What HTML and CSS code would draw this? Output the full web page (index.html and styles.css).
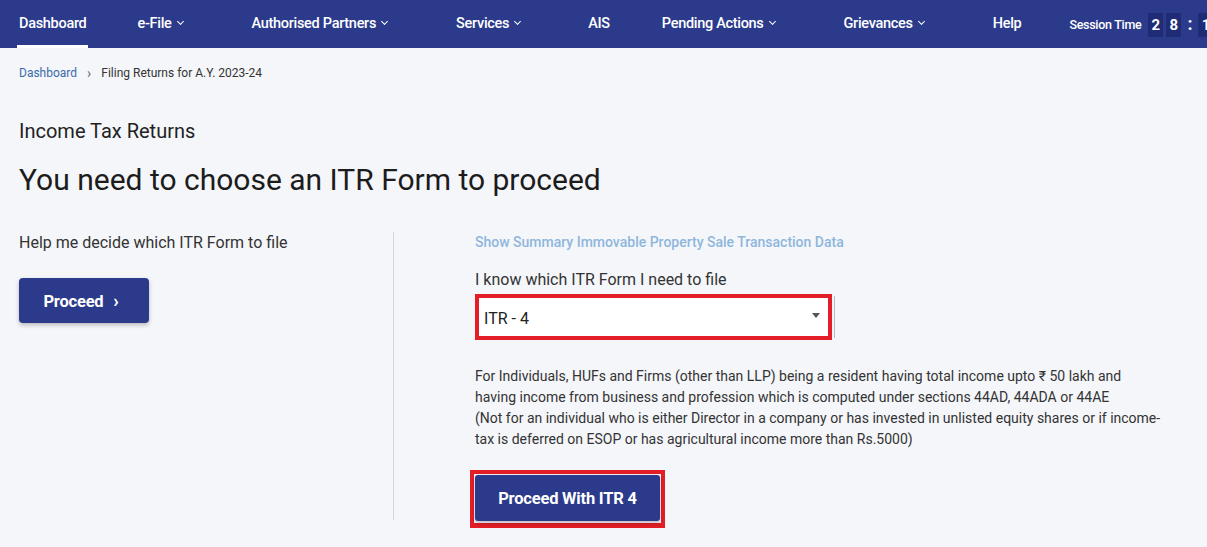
FILE: index.html
```html
<!DOCTYPE html>
<html lang="en">
<head>
    <meta charset="UTF-8">
    <meta name="viewport" content="width=device-width, initial-scale=1.0">
    <title>Filing Returns for A.Y. 2023-24</title>
    <link rel="stylesheet" href="styles.css">
</head>
<body>

<nav class="topnav">
    <a class="nav-item active" href="#">Dashboard</a>
    <a class="nav-item w-efile" href="#">e-File <span class="chev"></span></a>
    <a class="nav-item w-partners" href="#">Authorised Partners <span class="chev"></span></a>
    <a class="nav-item w-services" href="#">Services <span class="chev"></span></a>
    <a class="nav-item w-ais" href="#">AIS</a>
    <a class="nav-item w-pending" href="#">Pending Actions <span class="chev"></span></a>
    <a class="nav-item w-griev" href="#">Grievances <span class="chev"></span></a>
    <a class="nav-item w-help" href="#">Help</a>
    <div class="session">
        <span class="session-label">Session Time</span>
        <span class="digit">2</span>
        <span class="digit">8</span>
        <span class="colon">:</span>
        <span class="digit">1</span>
    </div>
</nav>

<main class="page">
    <div class="breadcrumb">
        <a href="#">Dashboard</a>
        <span class="crumb-sep">&#8250;</span>
        <span>Filing Returns for A.Y. 2023-24</span>
    </div>

    <h2 class="subtitle">Income Tax Returns</h2>
    <h1 class="title">You need to choose an ITR Form to proceed</h1>

    <div class="choose">
        <!-- left: guided -->
        <div class="choose-left">
            <p class="label">Help me decide which ITR Form to file</p>
            <button class="btn btn-proceed">Proceed <span class="arrow">&#8250;</span></button>
        </div>

        <!-- right: direct selection -->
        <div class="choose-right">
            <a class="summary-link" href="#">Show Summary Immovable Property Sale Transaction Data</a>
            <p class="label">I know which ITR Form I need to file</p>

            <div class="select-wrap">
                <div class="mark mark-select">
                    <div class="select">
                        <span>ITR - 4</span>
                        <span class="caret"></span>
                    </div>
                </div>
            </div>

            <p class="desc">
                For Individuals, HUFs and Firms (other than LLP) being a resident having total income upto &#8377; 50 lakh and<br>
                having income from business and profession which is computed under sections 44AD, 44ADA or 44AE<br>
                (Not for an individual who is either Director in a company or has invested in unlisted equity shares or if income-tax is deferred on ESOP or has agricultural income more than Rs.5000)
            </p>

            <div class="mark mark-btn">
                <button class="btn btn-itr">Proceed With ITR 4</button>
            </div>
        </div>
    </div>
</main>

</body>
</html>
```

FILE: styles.css
```css
* {
    box-sizing: border-box;
}

body {
    margin: 0;
    background-color: #f5f6fa;
    font-family: Roboto, "Liberation Sans", Arial, sans-serif;
    color: #222;
    overflow: hidden;
}

a {
    text-decoration: none;
}

/* top navigation */
.topnav {
    display: flex;
    align-items: stretch;
    height: 48px;
    background-color: #2b3a8b;
    padding-left: 19px;
    white-space: nowrap;
    overflow: hidden;
}

.nav-item {
    display: flex;
    align-items: center;
    gap: 5px;
    color: #ffffff;
    font-size: 14.5px;
    font-weight: 500;
    letter-spacing: -0.3px;
    border-bottom: 3px solid transparent;
    padding-top: 2px;
}

.nav-item.active {
    border-bottom-color: #ffffff;
    margin-left: -2px;
    padding: 2px 2px 0;
}

.nav-item:first-child {
    margin-right: 49px;
}

.w-efile { margin-right: 69px; }
.w-partners { margin-right: 69px; }
.w-services { margin-right: 68px; }
.w-ais { margin-right: 52px; }
.w-pending { margin-right: 69px; }
.w-griev { margin-right: 69px; }
.w-help { margin-right: 48px; }

.chev {
    display: inline-block;
    width: 5px;
    height: 5px;
    border-right: 1.4px solid #ffffff;
    border-bottom: 1.4px solid #ffffff;
    transform: rotate(45deg);
    margin-top: -4px;
    margin-left: 1px;
}

.session {
    display: flex;
    align-items: center;
    gap: 3px;
    color: #ffffff;
    padding-top: 1px;
}

.session-label {
    font-size: 12.5px;
    font-weight: 500;
    letter-spacing: -0.3px;
    margin-right: 4px;
}

.digit {
    display: inline-block;
    width: 15px;
    height: 24px;
    line-height: 24px;
    text-align: center;
    background-color: #1f2c75;
    font-size: 15px;
    font-weight: 700;
}

.colon {
    font-size: 18px;
    font-weight: 700;
    margin: -3px 3px 0;
}

/* page body */
.page {
    padding: 0 19px;
}

.breadcrumb {
    display: flex;
    align-items: center;
    gap: 8px;
    padding-top: 17px;
    font-size: 12px;
    color: #333;
}

.breadcrumb a {
    color: #3a6aa8;
}

.crumb-sep {
    color: #666;
    font-size: 14px;
    margin: 0 2px;
}

.subtitle {
    margin: 38px 0 0;
    font-size: 20px;
    font-weight: 400;
    color: #222;
}

.title {
    margin: 19px 0 0;
    font-size: 30px;
    font-weight: 400;
    color: #1c1c1c;
}

.choose {
    display: flex;
    margin-top: 35px;
}

.choose-left {
    width: 375px;
    padding-top: 1px;
    border-right: 1px solid #d5d7dc;
    height: 288px;
}

.label {
    margin: 0;
    font-size: 16px;
    color: #333;
}

.btn {
    border: none;
    border-radius: 4px;
    background-color: #2b3a8b;
    color: #ffffff;
    font-family: Roboto, "Liberation Sans", Arial, sans-serif;
    font-size: 16.5px;
    font-weight: 700;
    cursor: pointer;
    box-shadow: 0 2px 4px rgba(0, 0, 0, 0.25);
}

.btn-proceed {
    margin-top: 26px;
    width: 130px;
    height: 45px;
    letter-spacing: -0.2px;
    padding-right: 12px;
}

.btn-proceed .arrow {
    font-size: 18px;
    margin-left: 6px;
}

.choose-right {
    padding-left: 81px;
    flex: 1;
}

.summary-link {
    display: block;
    margin-top: 2px;
    font-size: 14px;
    font-weight: 500;
    color: #8fb6dc;
}

.choose-right .label {
    margin-top: 20px;
}

/* red annotation boxes */
.mark {
    display: inline-block;
    border: 4px solid #e31e26;
}

.select-wrap {
    position: relative;
    width: 360px;
    margin-top: 5px;
}

.select-wrap::after {
    content: "";
    position: absolute;
    right: 0;
    top: 2px;
    bottom: 2px;
    border-right: 1px solid #b8bbc2;
}

.mark-select {
    width: 357px;
    height: 46px;
}

.select {
    display: flex;
    align-items: center;
    justify-content: space-between;
    height: 100%;
    padding: 2px 8px 0 5px;
    background-color: #ffffff;
    font-size: 16px;
    color: #222;
}

.caret {
    width: 0;
    height: 0;
    border-left: 4px solid transparent;
    border-right: 4px solid transparent;
    border-top: 5px solid #555;
    margin-top: -5px;
}

.desc {
    margin: 26px 0 0;
    width: 695px;
    font-size: 14px;
    line-height: 21px;
    color: #333;
}

.mark-btn {
    margin: 20px 0 0 -5px;
    padding: 1px 1px 2px;
    border-bottom-width: 5px;
}

.btn-itr {
    display: block;
    width: 185px;
    height: 46px;
    border-radius: 3px;
    letter-spacing: -0.2px;
}
```
